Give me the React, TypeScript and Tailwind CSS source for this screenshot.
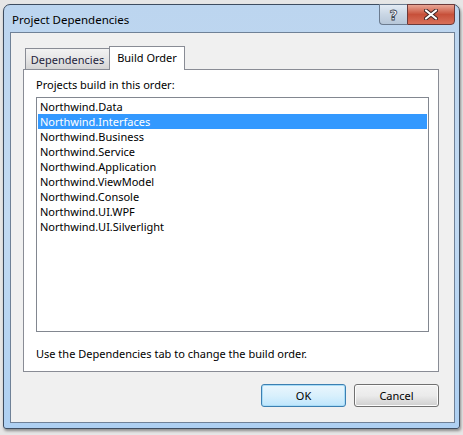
import React from "react";

const projects = [
  "Northwind.Data",
  "Northwind.Interfaces",
  "Northwind.Business",
  "Northwind.Service",
  "Northwind.Application",
  "Northwind.ViewModel",
  "Northwind.Console",
  "Northwind.UI.WPF",
  "Northwind.UI.Silverlight",
];

function CaptionButtons() {
  return (
    <div className="absolute right-[4px] top-[-1px] flex">
      <div className="flex h-[21px] w-[28px] items-center justify-center rounded-bl-[4px] border border-r-0 border-[#6b7b8f] bg-gradient-to-b from-[#e3ebf4] via-[#c9d6e4] to-[#b7c7d9]">
        <span className="text-[14px] font-bold leading-none text-white [-webkit-text-stroke:0.8px_#3b4452] [font-family:'DejaVu_Sans',sans-serif]">
          ?
        </span>
      </div>
      <div className="flex h-[21px] w-[48px] items-center justify-center rounded-br-[4px] border border-[#6b3a3a] bg-gradient-to-b from-[#e8a595] via-[#c7503a] to-[#d8705a]">
        <svg width="14" height="11" viewBox="0 0 14 11">
          <path
            d="M2 1.5 L12 9.5 M12 1.5 L2 9.5"
            stroke="#3b2424"
            strokeWidth="4"
            strokeLinecap="round"
          />
          <path
            d="M2 1.5 L12 9.5 M12 1.5 L2 9.5"
            stroke="#ffffff"
            strokeWidth="2.2"
            strokeLinecap="round"
          />
        </svg>
      </div>
    </div>
  );
}

export default function App() {
  return (
    <div className="h-[435px] w-[463px] overflow-hidden bg-[#e6e6e6] pl-[3px] pt-[4px] text-[11px] text-black [font-family:'Noto_Sans',sans-serif]">
      {/* Window frame */}
      <div className="relative flex h-[425px] w-[457px] flex-col rounded-t-[7px] rounded-b-[3px] border border-[#3e4d60] bg-gradient-to-b from-[#bcd5ef] via-[#c2daf2] to-[#aed0f2] pb-[5px] pl-[6px] pr-[4px] shadow-[1px_2px_3px_rgba(0,0,0,0.4)]">
        {/* Title bar */}
        <div className="flex h-[27px] items-center pl-[2px] pt-[2px] text-[11.5px] text-black">
          Project Dependencies
        </div>
        <CaptionButtons />

        {/* Client area */}
        <div className="flex flex-1 flex-col border border-[#6f8197] bg-[#f0f0f0] pl-[12px] pr-[15px] pt-[13px]">
          {/* Tabs */}
          <div className="flex h-[23px] items-end pl-[2px]">
            <div className="-mr-px flex h-[21px] w-[85px] items-center justify-center border border-b-0 border-[#898c95] bg-gradient-to-b from-[#f2f2f2] via-[#e6e6e6] to-[#d4d4d4] pt-[1px] leading-[15px] text-[#1e1e3c]">
              Dependencies
            </div>
            <div className="relative z-10 -mb-px flex h-[24px] w-[76px] items-center justify-center border border-b-0 border-[#898c95] bg-white pb-[2px] leading-[15px]">
              Build Order
            </div>
          </div>

          {/* Tab panel */}
          <div className="flex h-[303px] flex-col border border-[#898c95] bg-white pl-[12px] pr-[9px] pt-[7px]">
            <div className="h-[20px] leading-[15px]">
              Projects build in this order:
            </div>
            <div className="flex h-[235px] flex-col border border-[#828790] p-px">
              {projects.map((p, i) => (
                <div
                  key={p}
                  className={
                    i === 1
                      ? "h-[15px] bg-[#3399ff] pl-[2px] leading-[15px] text-white"
                      : "h-[15px] pl-[2px] leading-[15px]"
                  }
                >
                  {p}
                </div>
              ))}
            </div>
            <div className="mt-[14px] leading-[15px]">
              Use the Dependencies tab to change the build order.
            </div>
          </div>

          {/* Buttons */}
          <div className="mt-[12px] flex justify-end gap-[8px]">
            <button className="h-[23px] w-[85px] rounded-[3px] border border-[#3c7fb1] bg-gradient-to-b from-[#eaf6fd] via-[#d9f0fc] to-[#bee6fd] leading-[15px] shadow-[inset_0_0_0_1px_#a8dcf7]">
              OK
            </button>
            <button className="h-[23px] w-[85px] rounded-[3px] border border-[#707070] bg-gradient-to-b from-[#f2f2f2] via-[#ebebeb] to-[#cfcfcf] leading-[15px] shadow-[inset_0_0_0_1px_#fcfcfc]">
              Cancel
            </button>
          </div>
        </div>
      </div>
    </div>
  );
}
